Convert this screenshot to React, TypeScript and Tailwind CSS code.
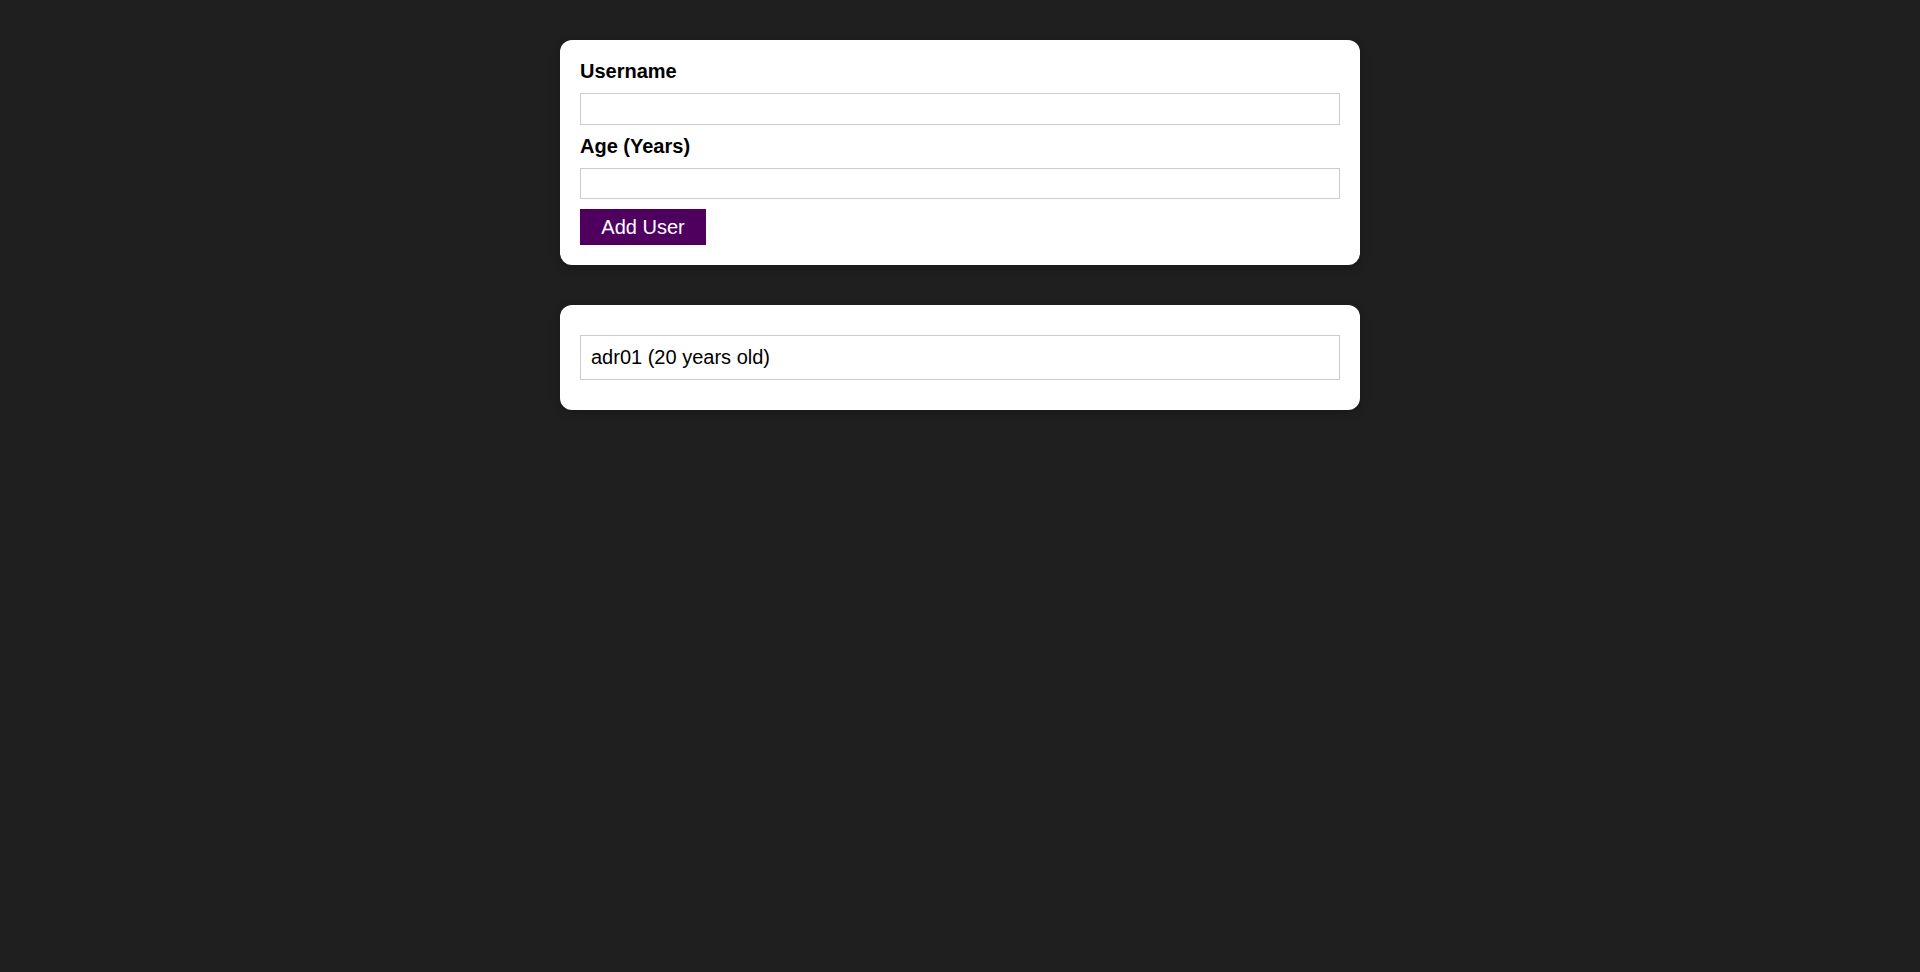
import React from "react";

export default function App() {
  return (
    <div
      className="min-h-[972px] w-full bg-[#1f1f1f] pt-px text-[20px] leading-[1.15] text-black"
      style={{ fontFamily: '"Liberation Sans", Arial, sans-serif' }}
    >
      <div className="mx-auto mt-[39px] w-[800px] rounded-[12px] bg-white p-[20px] shadow-[0_2px_10px_rgba(0,0,0,0.26)]">
        <form onSubmit={(e) => e.preventDefault()}>
          <label className="mb-[10px] block font-bold">Username</label>
          <input
            type="text"
            className="mb-[10px] block h-[32px] w-full border border-[#ccc] px-[3px] text-[20px] leading-[1.15] outline-none"
          />
          <label className="mb-[10px] block font-bold">Age (Years)</label>
          <input
            type="number"
            className="mb-[10px] block h-[31px] w-full border border-[#ccc] px-[3px] text-[20px] leading-[1.15] outline-none"
          />
          <button
            type="submit"
            className="block h-[36px] w-[126px] cursor-pointer border border-[#4f005f] bg-[#4f005f] px-[20px] text-[20px] leading-[1.15] text-white"
          >
            Add User
          </button>
        </form>
      </div>
      <div className="mx-auto mt-[40px] w-[800px] rounded-[12px] bg-white shadow-[0_2px_10px_rgba(0,0,0,0.26)]">
        <ul className="m-0 list-none p-[20px]">
          <li className="my-[10px] border border-[#ccc] p-[10px]">adr01 (20 years old)</li>
        </ul>
      </div>
    </div>
  );
}
